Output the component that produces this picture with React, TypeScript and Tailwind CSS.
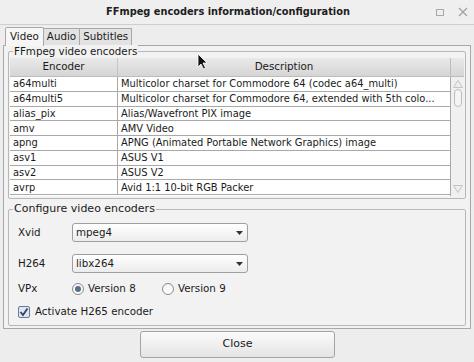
import React from "react";

const rows: [string, string][] = [
  ["a64multi", "Multicolor charset for Commodore 64 (codec a64_multi)"],
  ["a64multi5", "Multicolor charset for Commodore 64, extended with 5th colo..."],
  ["alias_pix", "Alias/Wavefront PIX image"],
  ["amv", "AMV Video"],
  ["apng", "APNG (Animated Portable Network Graphics) image"],
  ["asv1", "ASUS V1"],
  ["asv2", "ASUS V2"],
  ["avrp", "Avid 1:1 10-bit RGB Packer"],
];

function Select({ value }: { value: string }) {
  return (
    <div className="w-[176px] h-[19px] rounded-[3px] border border-[#9e9e9e] bg-gradient-to-b from-[#ffffff] to-[#ececec] flex items-center pl-[3px] pr-[4px]">
      <span className="flex-1">{value}</span>
      <svg width="7" height="4" viewBox="0 0 7 4">
        <path d="M0 0 L7 0 L3.5 4 Z" fill="#333" />
      </svg>
    </div>
  );
}

function Radio({ checked }: { checked: boolean }) {
  return (
    <div className="w-[12px] h-[12px] rounded-full border border-[#8a8a8a] bg-gradient-to-b from-[#f4f4f4] to-[#ffffff] flex items-center justify-center">
      {checked && <div className="w-[6px] h-[6px] rounded-full bg-[#5a6f8c]" />}
    </div>
  );
}

export default function App() {
  return (
    <div
      className="w-[474px] h-[362px] bg-[#ededed] flex flex-col text-[#1a1a1a] text-[10.3px] relative overflow-hidden"
      style={{ fontFamily: '"DejaVu Sans", sans-serif' }}
    >
      {/* Title bar */}
      <div className="h-[25px] grid grid-cols-[1fr_auto_1fr] items-center border-b border-[#cfcfcf] bg-[#efefef] shrink-0">
        <div />
        <div className="font-bold text-[9.8px] text-[#202020] pt-[1px] mr-[18px]">FFmpeg encoders information/configuration</div>
        <div className="flex justify-end items-center gap-[14px] pr-[6px]">
          <div className="w-[8px] h-[7px] border border-[#a8a8a8]" />
          <svg width="10" height="10" viewBox="0 0 10 10">
            <path d="M1 1 L9 9 M9 1 L1 9" stroke="#a0a0a0" strokeWidth="1.2" />
          </svg>
        </div>
      </div>

      {/* Tabs */}
      <div className="flex items-end pl-[5px] pt-[2px] h-[20px] shrink-0">
        <div className="h-[19px] px-[4px] flex items-center border border-b-0 border-[#a8a8a8] rounded-t-[2px] bg-[#f6f6f6] text-[10.3px] relative z-10 mb-[-1px]">
          Video
        </div>
        <div className="h-[17px] px-[3px] flex items-center border border-l-0 border-b-0 border-[#a8a8a8] bg-[#e2e2e2] text-[10.3px]">
          Audio
        </div>
        <div className="h-[17px] px-[3px] flex items-center border border-l-0 border-b-0 border-[#a8a8a8] bg-[#e2e2e2] text-[10.3px]">
          Subtitles
        </div>
      </div>

      {/* Tab panel */}
      <div className="mx-[3px] h-[284px] border border-[#a8a8a8] bg-[#f2f2f2] px-[4px] pt-[3px] flex flex-col shrink-0">
        {/* Group 1 */}
        <div className="relative border border-[#b8b8b8] rounded-[2px] mt-[2px] h-[148px] px-[1px] pt-[6px] pb-[2px]">
          <div className="absolute left-[4px] top-[-7px] bg-[#f2f2f2] px-[1px] leading-[12px]">FFmpeg video encoders</div>
          <div className="flex h-full text-[9.9px]">
            <div className="flex-1 flex flex-col">
              <div className="h-[19px] flex bg-gradient-to-b from-[#e9e9e9] to-[#d5d5d5] border-b border-[#bdbdbd] text-[10.3px]">
                <div className="w-[108px] border-r border-[#c4c4c4] flex items-center justify-center">Encoder</div>
                <div className="flex-1 flex items-center justify-center">Description</div>
              </div>
              <div className="flex-1 bg-white">
                {rows.map(([a, b]) => (
                  <div key={a} className="h-[14.75px] flex border-b border-[#a9a9a9] leading-[13px]">
                    <div className="w-[108px] border-r border-[#a9a9a9] pl-[3px] flex items-center">{a}</div>
                    <div className="flex-1 pl-[3px] flex items-center whitespace-nowrap overflow-hidden">{b}</div>
                  </div>
                ))}
              </div>
            </div>
            <div className="w-[14px] flex flex-col">
              <div className="h-[19px] bg-gradient-to-b from-[#e9e9e9] to-[#d5d5d5] border-b border-l border-[#bdbdbd]" />
              <div className="flex-1 border-l border-[#a9a9a9] bg-[#f0f0f0] flex flex-col items-center pt-[3px] pb-[3px]">
                <svg width="10" height="8" viewBox="0 0 10 8">
                  <path d="M5 0.5 L9.5 7.5 L0.5 7.5 Z" fill="#ededed" stroke="#c4c4c4" />
                </svg>
                <div className="w-[8px] h-[18px] mt-[1px] rounded-[4px] border border-[#bcbcbc] bg-[#f4f4f4]" />
                <div className="flex-1" />
                <svg width="10" height="8" viewBox="0 0 10 8">
                  <path d="M5 7.5 L9.5 0.5 L0.5 0.5 Z" fill="#ededed" stroke="#c4c4c4" />
                </svg>
              </div>
            </div>
          </div>
        </div>

        {/* Group 2 */}
        <div className="relative border border-[#b8b8b8] rounded-[2px] mt-[10px] h-[117px] pl-[9px] pt-[13px]">
          <div className="absolute left-[4px] top-[-7px] bg-[#f2f2f2] px-[1px] leading-[12px] text-[11px]">Configure video encoders</div>
          <div className="flex items-center h-[19px]">
            <div className="w-[54px]">Xvid</div>
            <Select value="mpeg4" />
          </div>
          <div className="flex items-center h-[19px] mt-[12px]">
            <div className="w-[54px]">H264</div>
            <Select value="libx264" />
          </div>
          <div className="flex items-center h-[16px] mt-[8px]">
            <div className="w-[54px]">VPx</div>
            <Radio checked />
            <span className="ml-[4px] w-[74px]">Version 8</span>
            <Radio checked={false} />
            <span className="ml-[4px]">Version 9</span>
          </div>
          <div className="flex items-center h-[16px] mt-[7px]">
            <div className="w-[12px] h-[12px] rounded-[2px] border border-[#6a7a96] bg-[#dfe6f0] flex items-center justify-center">
              <svg width="10" height="10" viewBox="0 0 10 10">
                <path d="M1.5 5 L4 8 L8.5 1.5" stroke="#2f4566" strokeWidth="1.8" fill="none" />
              </svg>
            </div>
            <span className="ml-[5px]">Activate H265 encoder</span>
          </div>
        </div>
      </div>

      {/* Bottom */}
      <div className="flex justify-center pt-[2px]">
        <div className="w-[195px] h-[27px] ml-[1px] rounded-[3px] border border-[#a4a4a4] bg-gradient-to-b from-[#fbfbfb] to-[#e4e4e4] flex items-center justify-center text-[11px]">
          Close
        </div>
      </div>

      {/* Mouse cursor */}
      <svg className="absolute left-[197px] top-[53px]" width="11" height="17" viewBox="0 0 11 17">
        <path d="M1 1 L1 14 L4 11 L6.5 16 L8.5 15 L6 10 L10 10 Z" fill="#111" stroke="#fff" strokeWidth="0.8" />
      </svg>
    </div>
  );
}
